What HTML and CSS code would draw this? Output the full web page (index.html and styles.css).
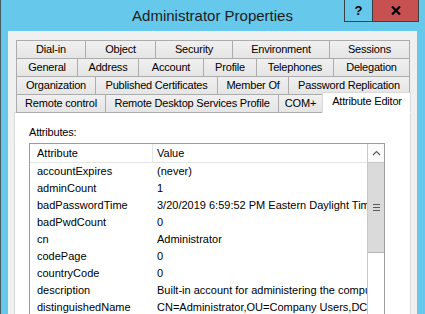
FILE: index.html
```html
<!DOCTYPE html>
<html>
<head>
<meta charset="utf-8">
<link rel="stylesheet" href="styles.css">
</head>
<body>
<div class="window">
  <div class="titlebar">
    <span></span>
    <div class="title">Administrator Properties</div>
    <div class="caption-btns">
      <div class="cbtn help">?</div>
      <div class="cbtn close">
        <svg width="10" height="9" viewBox="0 0 10 9"><path d="M1 0.5 L9 8.5 M9 0.5 L1 8.5" stroke="#000" stroke-width="2.2" fill="none"/></svg>
      </div>
    </div>
  </div>
  <div class="client">
    <div class="tabs">
      <div class="tab-row">
        <div class="tab w70">Dial-in</div>
        <div class="tab w71">Object</div>
        <div class="tab w78">Security</div>
        <div class="tab w98">Environment</div>
        <div class="tab w81">Sessions</div>
      </div>
      <div class="tab-row">
        <div class="tab w62">General</div>
        <div class="tab w62">Address</div>
        <div class="tab w66">Account</div>
        <div class="tab w54">Profile</div>
        <div class="tab w78">Telephones</div>
        <div class="tab w77">Delegation</div>
      </div>
      <div class="tab-row">
        <div class="tab w80">Organization</div>
        <div class="tab w123">Published Certificates</div>
        <div class="tab w72">Member Of</div>
        <div class="tab w122">Password Replication</div>
      </div>
      <div class="tab-row">
        <div class="tab w90">Remote control</div>
        <div class="tab w174">Remote Desktop Services Profile</div>
        <div class="tab w45">COM+</div>
        <div class="tab w89 selected">Attribute Editor</div>
      </div>
    </div>
    <div class="panel">
      <div class="label">Attributes:</div>
      <div class="listbox">
        <div class="list-main">
          <div class="list-header">
            <div class="hcell attr">Attribute</div>
            <div class="hcell val">Value</div>
          </div>
          <div class="row"><div class="attr">accountExpires</div><div class="val">(never)</div></div>
          <div class="row"><div class="attr">adminCount</div><div class="val">1</div></div>
          <div class="row"><div class="attr">badPasswordTime</div><div class="val">3/20/2019 6:59:52 PM Eastern Daylight Time</div></div>
          <div class="row"><div class="attr">badPwdCount</div><div class="val">0</div></div>
          <div class="row"><div class="attr">cn</div><div class="val">Administrator</div></div>
          <div class="row"><div class="attr">codePage</div><div class="val">0</div></div>
          <div class="row"><div class="attr">countryCode</div><div class="val">0</div></div>
          <div class="row"><div class="attr">description</div><div class="val">Built-in account for administering the computer/domain</div></div>
          <div class="row"><div class="attr">distinguishedName</div><div class="val">CN=Administrator,OU=Company Users,DC=ad,DC=local</div></div>
        </div>
        <div class="scrollbar">
          <div class="sb-up">
            <svg width="9" height="6" viewBox="0 0 9 6"><path d="M1 5 L4.5 1.5 L8 5" stroke="#606060" stroke-width="1.2" fill="none"/></svg>
          </div>
          <div class="sb-thumb">
            <div class="grip"></div>
            <div class="grip"></div>
            <div class="grip"></div>
          </div>
        </div>
      </div>
    </div>
  </div>
</div>
</body>
</html>
```

FILE: styles.css
```css
* { box-sizing: border-box; }
html, body { margin: 0; padding: 0; }
body {
  width: 425px;
  height: 314px;
  overflow: hidden;
  font-family: "Liberation Sans", Arial, sans-serif;
}
.window {
  width: 425px;
  height: 314px;
  background: #66c8ea;
  border-left: 1px solid #4a5a62;
  display: flex;
  flex-direction: column;
  overflow: hidden;
}
.titlebar {
  height: 31px;
  flex: none;
  display: grid;
  grid-template-columns: 1fr auto 1fr;
  align-items: start;
}
.title {
  font-size: 15px;
  line-height: 31px;
  color: #1c1c1c;
  white-space: nowrap;
  margin-left: -1px;
}
.caption-btns {
  display: flex;
  justify-content: flex-end;
  padding-right: 6px;
}
.cbtn {
  height: 22px;
  border: 1px solid #3c3f42;
  border-top: none;
  display: flex;
  align-items: center;
  justify-content: center;
}
.help {
  width: 29px;
  background: #66c8ea;
  font-weight: bold;
  font-size: 13px;
  color: #000;
  padding-bottom: 1px;
}
.close {
  width: 47px;
  margin-left: -1px;
  background: #c75050;
  padding-left: 1px;
}
.client {
  flex: 1;
  margin: 0 8px 0 7px;
  background: #f0f0f0;
  padding: 9px 6px 0 6px;
  font-size: 11px;
  letter-spacing: -0.2px;
  color: #000;
}
.tabs {
  padding-left: 2px;
}
.tab-row {
  display: flex;
  align-items: flex-start;
}
.tab-row + .tab-row { margin-top: -1px; }
.tab {
  height: 19px;
  border: 1px solid #acacac;
  background: linear-gradient(#f0f0f0, #e5e5e5);
  text-align: center;
  line-height: 17px;
  white-space: nowrap;
  flex: none;
}
.tab + .tab { margin-left: -1px; }
.tab.selected {
  position: relative;
  z-index: 1;
  margin-top: -2px;
  height: 21px;
  background: #fff;
  border-color: #d9d9d9;
  border-bottom-color: #fff;
  line-height: 17px;
  padding-left: 1px;
}
.w45 { width: 45px; } .w54 { width: 54px; } .w62 { width: 62px; }
.w66 { width: 66px; } .w70 { width: 70px; } .w71 { width: 71px; }
.w72 { width: 72px; } .w77 { width: 77px; } .w78 { width: 78px; }
.w80 { width: 80px; } .w81 { width: 81px; } .w89 { width: 89px; }
.w90 { width: 90px; } .w98 { width: 98px; } .w122 { width: 122px; }
.w123 { width: 123px; } .w174 { width: 174px; }
.panel {
  margin-top: -1px;
  background: #fff;
  border: 1px solid #d9d9d9;
  height: 230px;
  padding: 13px 0 0 14px;
}
.label {
  line-height: 13px;
  height: 13px;
}
.listbox {
  margin-top: 4px;
  width: 356px;
  height: 200px;
  border: 1px solid #9c9c9c;
  display: flex;
  letter-spacing: 0;
}
.list-main {
  width: 337px;
  overflow: hidden;
  white-space: nowrap;
}
.list-header {
  display: grid;
  grid-template-columns: 123px 1fr;
  height: 19px;
  border-bottom: 1px solid #e5e5e5;
}
.hcell {
  padding-top: 1px;
  line-height: 17px;
}
.hcell.attr { border-right: 1px solid #e5e5e5; }
.row {
  display: grid;
  grid-template-columns: 123px 1fr;
  height: 17px;
  line-height: 17px;
}
.attr { padding-left: 7px; overflow: hidden; }
.val { padding-left: 4px; overflow: hidden; }
.scrollbar {
  width: 17px;
  flex: none;
  border-left: 1px solid #c8c8c8;
  background: #fff;
  display: flex;
  flex-direction: column;
}
.sb-up {
  height: 19px;
  border-bottom: 1px solid #c8c8c8;
  background: #fafafa;
  display: flex;
  align-items: center;
  justify-content: center;
  padding-left: 1px;
}
.sb-thumb {
  height: 90px;
  background: #dadada;
  border-bottom: 1px solid #b4b4b4;
  display: flex;
  flex-direction: column;
  align-items: center;
  justify-content: center;
  gap: 2px;
  padding-left: 1px;
}
.grip {
  width: 7px;
  height: 1px;
  background: #5a5a5a;
}
```
